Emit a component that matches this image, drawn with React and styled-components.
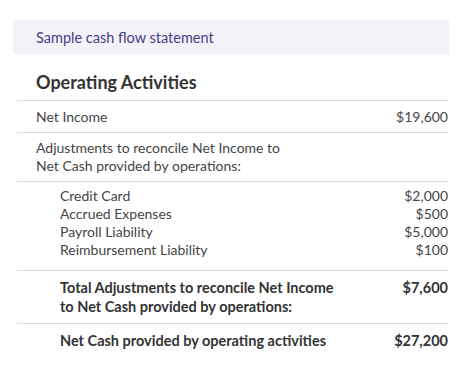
import React from "react";
import styled, { createGlobalStyle } from "styled-components";

const Global = createGlobalStyle`
  html, body { margin: 0; padding: 0; background: #ffffff; }
  body { font-family: Lato, "Noto Sans", sans-serif; color: #3b3b3b; }
`;

const Page = styled.div`
  width: 436px;
  padding: 20px 0 0 13px;
`;

const Banner = styled.div`
  height: 34px;
  background: #f2f2f9;
  display: flex;
  align-items: center;
  padding-left: 23px;
  font-size: 14.5px;
  color: #4a3d86;
`;

const Table = styled.div`
  margin-left: 4px;
`;

const Title = styled.h2`
  margin: 0;
  padding: 17px 0 7px 19px;
  font-size: 18px;
  line-height: 22px;
  font-weight: 700;
  color: #333;
  border-bottom: 1px solid #dcdcdc;
`;

const Section = styled.div`
  padding: ${(p) => p.$pad};
  border-bottom: ${(p) => (p.$last ? "none" : "1px solid #dcdcdc")};
  display: flex;
  flex-direction: column;
`;

const Row = styled.div`
  display: flex;
  justify-content: space-between;
  align-items: flex-start;
  padding-left: ${(p) => (p.$indent ? "43px" : "19px")};
  font-size: ${(p) => (p.$bold ? "14.5px" : "14px")};
  line-height: ${(p) => p.$lh || "18px"};
  font-weight: ${(p) => (p.$bold ? 700 : 400)};
  color: ${(p) => (p.$bold ? "#333" : "#454545")};
`;

const Label = styled.span`
  max-width: ${(p) => p.$max || "none"};
`;

const Amount = styled.span`
  text-align: right;
  padding-right: 1px;
`;

const items = [
  ["Credit Card", "$2,000"],
  ["Accrued Expenses", "$500"],
  ["Payroll Liability", "$5,000"],
  ["Reimbursement Liability", "$100"],
];

export default function App() {
  return (
    <>
      <Global />
      <Page>
        <Banner>Sample cash flow statement</Banner>
        <Table>
          <Title>Operating Activities</Title>
          <Section $pad="7px 0 6px">
            <Row>
              <Label>Net Income</Label>
              <Amount>$19,600</Amount>
            </Row>
          </Section>
          <Section $pad="6px 0 6px">
            <Row>
              <Label $max="255px">
                Adjustments to reconcile Net Income to Net Cash provided by operations:
              </Label>
            </Row>
          </Section>
          <Section $pad="5px 0 11px">
            {items.map(([l, a]) => (
              <Row $indent key={l}>
                <Label>{l}</Label>
                <Amount>{a}</Amount>
              </Row>
            ))}
          </Section>
          <Section $pad="7px 0 7px">
            <Row $indent $bold $lh="19px">
              <Label $max="290px">
                Total Adjustments to reconcile Net Income to Net Cash provided by operations:
              </Label>
              <Amount>$7,600</Amount>
            </Row>
          </Section>
          <Section $pad="8px 0 6px" $last>
            <Row $indent $bold>
              <Label>Net Cash provided by operating activities</Label>
              <Amount>$27,200</Amount>
            </Row>
          </Section>
        </Table>
      </Page>
    </>
  );
}
